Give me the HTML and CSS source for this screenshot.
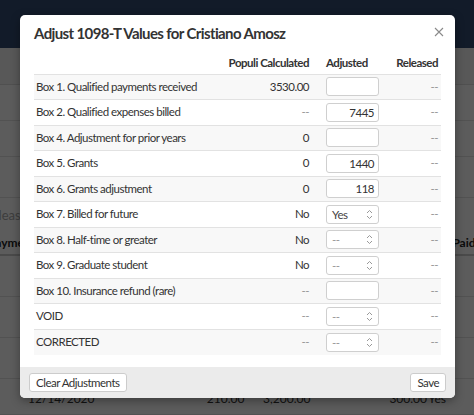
FILE: index.html
```html
<!DOCTYPE html>
<html>
<head>
<meta charset="utf-8">
<link rel="stylesheet" href="styles.css">
</head>
<body>
<div class="page">
  <div class="topbar"></div>
  <div class="bg-content">
    <div class="bg-band"></div>
    <div class="bg-row"></div>
    <div class="bg-row"></div>
    <div class="bg-row short"></div>
    <div class="bg-section">Releases</div>
    <div class="bg-head"><span>Payment</span><span>Paid for</span></div>
    <div class="bg-row tall"></div>
    <div class="bg-row tall"></div>
    <div class="bg-row tall"></div>
    <div class="bg-row last"><span class="d">12/14/2020</span><span class="n1">210.00</span><span class="n2">3,200.00</span><span class="n3">300.00</span><span class="n4">Yes</span></div>
  </div>
  <div class="backdrop">
    <div class="modal">
      <div class="modal-header">
        <h2 class="modal-title">Adjust 1098-T Values for Cristiano Amosz</h2>
        <svg class="close" width="10" height="10" viewBox="0 0 10 10"><path d="M1 1L9 9M9 1L1 9" stroke="#8a8a8a" stroke-width="1.1" fill="none"/></svg>
      </div>
      <div class="modal-body">
        <table class="values">
          <colgroup><col class="c-label"><col class="c-calc"><col class="c-adj"><col class="c-rel"></colgroup>
          <thead>
            <tr><th></th><th class="num">Populi Calculated</th><th class="adj">Adjusted</th><th class="num rel">Released</th></tr>
          </thead>
          <tbody>
            <tr><td>Box 1. Qualified payments received</td><td class="num">3530.00</td><td class="adj"><div class="input"></div></td><td class="num rel muted">--</td></tr>
            <tr><td>Box 2. Qualified expenses billed</td><td class="num muted">--</td><td class="adj"><div class="input">7445</div></td><td class="num rel muted">--</td></tr>
            <tr><td>Box 4. Adjustment for prior years</td><td class="num">0</td><td class="adj"><div class="input"></div></td><td class="num rel muted">--</td></tr>
            <tr><td>Box 5. Grants</td><td class="num">0</td><td class="adj"><div class="input">1440</div></td><td class="num rel muted">--</td></tr>
            <tr><td>Box 6. Grants adjustment</td><td class="num">0</td><td class="adj"><div class="input">118</div></td><td class="num rel muted">--</td></tr>
            <tr><td>Box 7. Billed for future</td><td class="num">No</td><td class="adj"><div class="select"><span>Yes</span><svg width="7" height="11" viewBox="0 0 7 11"><path d="M1 4L3.5 1.5L6 4M1 7L3.5 9.5L6 7" stroke="#999" stroke-width="1" fill="none"/></svg></div></td><td class="num rel muted">--</td></tr>
            <tr><td>Box 8. Half-time or greater</td><td class="num">No</td><td class="adj"><div class="select"><span class="muted">--</span><svg width="7" height="11" viewBox="0 0 7 11"><path d="M1 4L3.5 1.5L6 4M1 7L3.5 9.5L6 7" stroke="#999" stroke-width="1" fill="none"/></svg></div></td><td class="num rel muted">--</td></tr>
            <tr><td>Box 9. Graduate student</td><td class="num">No</td><td class="adj"><div class="select"><span class="muted">--</span><svg width="7" height="11" viewBox="0 0 7 11"><path d="M1 4L3.5 1.5L6 4M1 7L3.5 9.5L6 7" stroke="#999" stroke-width="1" fill="none"/></svg></div></td><td class="num rel muted">--</td></tr>
            <tr><td>Box 10. Insurance refund (rare)</td><td class="num muted">--</td><td class="adj"><div class="input"></div></td><td class="num rel muted">--</td></tr>
            <tr><td>VOID</td><td class="num muted">--</td><td class="adj"><div class="select"><span class="muted">--</span><svg width="7" height="11" viewBox="0 0 7 11"><path d="M1 4L3.5 1.5L6 4M1 7L3.5 9.5L6 7" stroke="#999" stroke-width="1" fill="none"/></svg></div></td><td class="num rel muted">--</td></tr>
            <tr><td>CORRECTED</td><td class="num muted">--</td><td class="adj"><div class="select"><span class="muted">--</span><svg width="7" height="11" viewBox="0 0 7 11"><path d="M1 4L3.5 1.5L6 4M1 7L3.5 9.5L6 7" stroke="#999" stroke-width="1" fill="none"/></svg></div></td><td class="num rel muted">--</td></tr>
          </tbody>
        </table>
      </div>
      <div class="modal-footer">
        <button class="btn">Clear Adjustments</button>
        <button class="btn">Save</button>
      </div>
    </div>
  </div>
</div>
</body>
</html>
```

FILE: styles.css
```css
* { box-sizing: border-box; }
html, body { margin: 0; padding: 0; }
body {
  font-family: Lato, "Open Sans", "Liberation Sans", sans-serif;
  color: #333;
  width: 474px;
  height: 415px;
  overflow: hidden;
}
.page {
  position: relative;
  width: 474px;
  height: 415px;
  background: #fff;
  overflow: hidden;
}
.topbar {
  height: 48px;
  background: #324b72;
}
.bg-content {
  font-size: 12px;
  color: #222;
}
.bg-band {
  height: 37px;
  background: #f4f4f4;
  border-bottom: 1px solid #ddd;
}
.bg-row {
  height: 36px;
  border-bottom: 1px solid #e3e3e3;
  display: flex;
  align-items: center;
  padding: 0 28px;
}
.bg-row.short { height: 41px; }
.bg-row.tall { height: 41px; }
.bg-section {
  height: 34px;
  line-height: 34px;
  margin-left: -16px;
  color: #aaa;
  font-size: 13px;
}
.bg-head {
  display: flex;
  justify-content: space-between;
  height: 24px;
  line-height: 22px;
  margin: 0 -20px 0 -12px;
  font-weight: 700;
  border-bottom: 2px solid #ccc;
}
.bg-row.last { color: #333; align-items: flex-start; padding-top: 12px; }
.bg-row.last .d { width: 184px; }
.bg-row.last .n1 { width: 58px; }
.bg-row.last .n2 { width: 130px; }
.bg-row.last .n3 { width: 40px; }
.backdrop {
  position: absolute;
  inset: 0;
  background: rgba(0, 0, 0, 0.64);
  padding: 15px 0 0 20px;
}
.modal {
  width: 435px;
  background: #fff;
  border-radius: 5px;
  box-shadow: 0 3px 10px rgba(0, 0, 0, 0.35);
  overflow: hidden;
}
.modal-header {
  display: flex;
  justify-content: space-between;
  align-items: flex-start;
  padding: 8px 11px 7px 14px;
  height: 35px;
}
.modal-title {
  margin: 0;
  font-size: 15px;
  letter-spacing: -0.62px;
  line-height: 20px;
  font-weight: 700;
  color: #333;
}
.close { margin-top: 4px; }
.modal-body {
  padding: 0 14px 12px;
}
.values {
  width: 407px;
  border-collapse: collapse;
  table-layout: fixed;
  font-size: 11.5px;
  letter-spacing: -0.5px;
}
.c-label { width: 183px; }
.c-calc { width: 100px; }
.c-adj { width: 64px; }
.c-rel { width: 60px; }
.values th {
  height: 24px;
  padding: 0 0 3px;
  vertical-align: bottom;
  line-height: 16px;
  font-weight: 700;
  text-align: left;
  color: #333;
  white-space: nowrap;
}
.values td {
  height: 25.5px;
  padding: 0 0 0 2px;
  border-top: 1px solid #e2e2e2;
  vertical-align: middle;
  white-space: nowrap;
  line-height: 16px;
}
.values tbody tr:nth-child(odd) td { background: #f8f8f8; }
.values .num { text-align: right; padding-right: 8px; }
.values .rel { padding-right: 3px; }
.values .adj { padding-left: 9px; padding-right: 0; text-align: left; }
.muted { color: #999; }
.input, .select {
  width: 53px;
  height: 19px;
  border: 1px solid #cfcfcf;
  border-radius: 3px;
  background: #fff;
  font-size: 11.5px;
  line-height: 17px;
}
.input {
  text-align: right;
  padding-right: 4px;
}
.select {
  display: flex;
  justify-content: space-between;
  align-items: center;
  padding: 0 5px 0 5px;
  color: #444;
}
.modal-footer {
  display: flex;
  justify-content: space-between;
  align-items: center;
  background: #ebebeb;
  height: 31px;
  padding: 0 9px;
}
.btn {
  font-family: Lato, "Open Sans", "Liberation Sans", sans-serif;
  font-size: 11.5px;
  letter-spacing: -0.5px;
  color: #333;
  height: 19px;
  line-height: 17px;
  padding: 0 6px;
  background: #fff;
  border: 1px solid #ccc;
  border-radius: 3px;
}
```
